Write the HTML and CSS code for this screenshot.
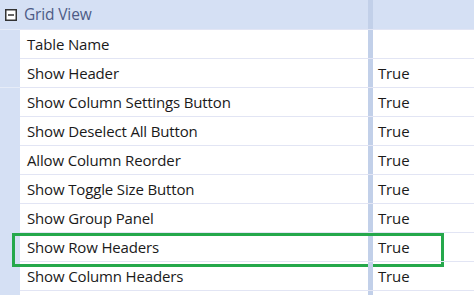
FILE: index.html
```html
<!DOCTYPE html>
<html>
<head>
<meta charset="utf-8">
<link rel="stylesheet" href="styles.css">
</head>
<body>
<div class="grid">
  <div class="cat">
    <div class="cat-gutter"><span class="toggle"><svg width="12" height="12" viewBox="0 0 12 12"><rect x="0.75" y="0.75" width="10.5" height="10.5" fill="#fff" stroke="#333" stroke-width="1.5"/><rect x="3" y="5.25" width="6" height="1.5" fill="#333"/></svg></span></div>
    <div class="cat-title">Grid View</div>
    <div class="cat-sep"></div>
    <div class="cat-rest"></div>
  </div>
  <div class="group">
    <div class="gutter"></div>
    <div class="rows">
      <div class="row"><div class="name">Table Name</div><div class="sep"></div><div class="val"></div></div>
      <div class="row"><div class="name">Show Header</div><div class="sep"></div><div class="val">True</div></div>
    </div>
  </div>
  <div class="group">
    <div class="gutter"></div>
    <div class="rows">
      <div class="row"><div class="name">Show Column Settings Button</div><div class="sep"></div><div class="val">True</div></div>
      <div class="row"><div class="name">Show Deselect All Button</div><div class="sep"></div><div class="val">True</div></div>
      <div class="row"><div class="name">Allow Column Reorder</div><div class="sep"></div><div class="val">True</div></div>
      <div class="row"><div class="name">Show Toggle Size Button</div><div class="sep"></div><div class="val">True</div></div>
      <div class="row"><div class="name">Show Group Panel</div><div class="sep"></div><div class="val">True</div></div>
      <div class="row highlight"><div class="name">Show Row Headers</div><div class="sep"></div><div class="val">True</div><div class="mark"></div></div>
      <div class="row"><div class="name">Show Column Headers</div><div class="sep"></div><div class="val">True</div></div>
      <div class="row"><div class="name"></div><div class="sep"></div><div class="val"></div></div>
    </div>
  </div>
</div>
</body>
</html>
```
FILE: styles.css
```css
html, body {
  margin: 0;
  padding: 0;
  background: #ffffff;
  overflow: hidden;
}
body {
  font-family: "Open Sans", "Noto Sans", sans-serif;
  font-size: 15px;
  letter-spacing: -0.15px;
  color: #1a1a1a;
}
.grid {
  width: 474px;
  height: 295px;
  overflow: hidden;
}
.cat {
  display: flex;
  height: 29px;
  background: #d5e0f4;
}
.cat-gutter {
  width: 20px;
  display: flex;
  align-items: center;
  justify-content: center;
  padding-left: 2px;
  box-sizing: border-box;
}
.toggle {
  display: flex;
}
.cat-title {
  width: 348px;
  padding-left: 4px;
  box-sizing: border-box;
  line-height: 29px;
  color: #4d5b86;
  font-size: 15.5px;
}
.cat-sep {
  width: 5px;
  background: #c2d0e9;
}
.cat-rest {
  flex: 1;
}
.group {
  display: flex;
}
.gutter {
  width: 20px;
  background: #d5e0f4;
  border-top: 1px solid #e6ecf8;
  box-sizing: border-box;
}
.rows {
  flex: 1;
  display: flex;
  flex-direction: column;
}
.row {
  display: flex;
  height: 29px;
  border-top: 1px solid #e2e5f4;
  box-sizing: border-box;
  position: relative;
}
.name {
  width: 348px;
  padding-left: 7px;
  box-sizing: border-box;
  line-height: 28px;
  white-space: nowrap;
}
.sep {
  width: 5px;
  background: #c2d0e9;
}
.val {
  flex: 1;
  padding-left: 5px;
  line-height: 28px;
}
.mark {
  position: absolute;
  left: -8px;
  top: 0;
  width: 432px;
  height: 34px;
  border: 3px solid #25a84b;
  box-sizing: border-box;
}
```
